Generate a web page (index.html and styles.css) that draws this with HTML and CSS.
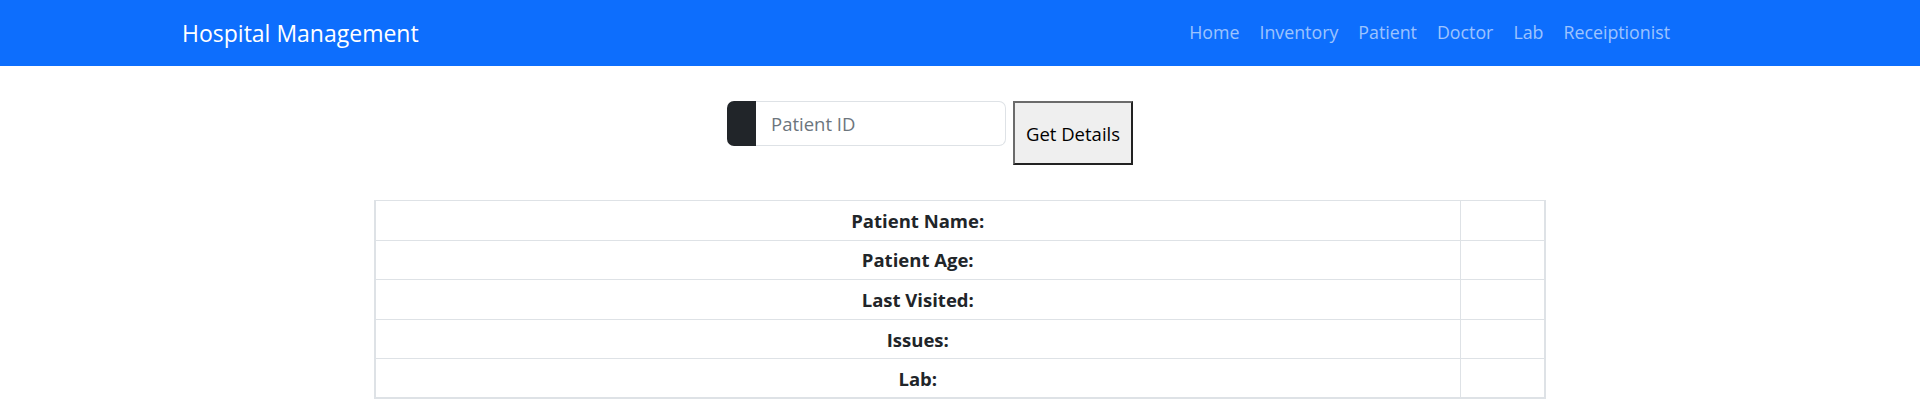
FILE: index.html
```html
<!DOCTYPE html>
<html lang="en">
<head>
<meta charset="utf-8">
<title>Hospital Management</title>
<link rel="stylesheet" href="styles.css">
</head>
<body>
<nav class="navbar">
  <a class="brand" href="#">Hospital Management</a>
  <ul class="nav">
    <li><a href="#">Home</a></li>
    <li><a href="#">Inventory</a></li>
    <li><a href="#">Patient</a></li>
    <li><a href="#">Doctor</a></li>
    <li><a href="#">Lab</a></li>
    <li><a href="#">Receiptionist</a></li>
  </ul>
</nav>
<main class="main">
  <form class="search">
    <div class="input-group">
      <span class="addon"></span>
      <input class="field" type="text" placeholder="Patient ID">
    </div>
    <button class="btn" type="button">Get Details</button>
  </form>
  <table class="details">
    <tbody>
      <tr><th>Patient Name:</th><td></td></tr>
      <tr><th>Patient Age:</th><td></td></tr>
      <tr><th>Last Visited:</th><td></td></tr>
      <tr><th>Issues:</th><td></td></tr>
      <tr><th>Lab:</th><td></td></tr>
    </tbody>
  </table>
</main>
</body>
</html>
```
FILE: styles.css
```css
* { box-sizing: border-box; }
html, body { margin: 0; padding: 0; }
body {
  font-family: "Open Sans", "Noto Sans", sans-serif;
  color: #212529;
  background: #fff;
}
.navbar {
  height: 66px;
  background: #0d6efd;
  display: flex;
  align-items: center;
  justify-content: space-between;
  padding: 0 240px 0 182px;
}
.brand {
  color: #fff;
  text-decoration: none;
  font-size: 23px;
  line-height: 1;
  margin-top: 1px;
}
.nav {
  display: flex;
  list-style: none;
  margin: 0;
  padding: 0;
}
.nav a {
  display: block;
  padding: 0 10px;
  color: rgba(255, 255, 255, 0.6);
  text-decoration: none;
  font-size: 17.8px;
  line-height: 1;
}
.main {
  padding-top: 35px;
}
.search {
  display: flex;
  justify-content: center;
  align-items: flex-start;
  padding-right: 60px;
  margin: 0;
}
.input-group {
  display: flex;
  width: 279px;
  height: 45px;
}
.addon {
  width: 29px;
  background: #212529;
  border-radius: 7px 0 0 7px;
}
.field {
  flex: 1;
  min-width: 0;
  border: 1px solid #dee2e6;
  border-left: 0;
  border-radius: 0 7px 7px 0;
  padding: 0 0 0 15px;
  font-family: inherit;
  font-size: 18.5px;
  color: #212529;
  outline: none;
}
.field::placeholder { color: #6c757d; }
.btn {
  margin-left: 7px;
  width: 120px;
  height: 64px;
  padding: 0;
  background: #efefef;
  border: 2px solid;
  border-color: #6b6b6b #222 #222 #6b6b6b;
  font-family: inherit;
  font-size: 18.5px;
  color: #000;
}
.details {
  margin: 35px auto 0;
  width: 1172px;
  border-collapse: collapse;
  border-style: solid;
  border-color: #dee2e6;
  border-width: 1px 2px 2px 2px;
}
.details th,
.details td {
  border: 1px solid #dee2e6;
  height: 39.6px;
  padding: 0;
}
.details th {
  font-size: 18.5px;
  font-weight: 700;
  text-align: center;
}
.details td {
  width: 85px;
}
```
